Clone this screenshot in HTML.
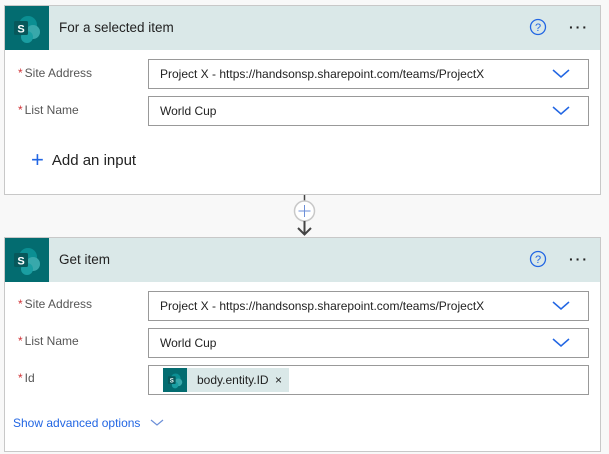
<!DOCTYPE html><html><head><style>
body{margin:0;width:609px;height:454px;background:#f8f8f8;font-family:"Liberation Sans",sans-serif;position:relative;overflow:hidden;color:#222}
.card{position:absolute;left:4px;width:597px;background:#fff;border:1px solid #c8c8c8;box-sizing:border-box}
.hdr{position:absolute;left:0;top:0;right:0;height:44px;background:#dae8e8}
.ic{position:absolute;left:0;top:0;width:44px;height:44px;background:#036c70}
.title{position:absolute;left:54px;top:14px;font-size:13.5px;color:#222}
.lbl{position:absolute;left:13px;font-size:12px;color:#555}
.lbl b{color:#d13438;font-weight:normal;margin-right:2px}
.inp{position:absolute;left:143px;width:441px;height:30px;border:1px solid #999;box-sizing:border-box;font-size:12px;line-height:28px;padding-left:11px}
.chev{position:absolute;right:18px;top:9px}
.q{position:absolute;left:524px;top:12px}
.dots{position:absolute;left:564px;top:13px;font-size:14px;letter-spacing:2px;font-weight:bold}
</style></head><body>
<svg width="0" height="0" style="position:absolute"><defs>
<g id="sp"><circle cx="23" cy="19" r="9" fill="#0b8f93"/><circle cx="28" cy="26" r="7" fill="#38a8ab"/><circle cx="22" cy="31" r="6" fill="#1a9ea2"/><rect x="9" y="15" width="14" height="14" rx="1.5" fill="#07585b"/><text x="16" y="26.5" font-size="11" font-weight="bold" fill="#fff" text-anchor="middle" font-family="Liberation Sans">S</text></g>
<g id="ch"><path d="M1 1l8 7 8-7" stroke="#2266e3" stroke-width="1.5" fill="none"/></g>
<g id="qq"><circle cx="9" cy="9" r="7.5" stroke="#2266e3" stroke-width="1.3" fill="none"/><text x="9" y="13" font-size="11" fill="#2266e3" text-anchor="middle" font-family="Liberation Sans">?</text></g>
</defs></svg>
<div class="card" style="top:5px;height:190px">
<div class="hdr"><div class="ic"><svg width="44" height="44"><use href="#sp"/></svg></div><div class="title">For a selected item</div>
<svg class="q" width="18" height="18"><use href="#qq"/></svg><div class="dots">···</div></div>
<div class="lbl" style="top:60px"><b>*</b>Site Address</div>
<div class="inp" style="top:53px">Project X - https://handsonsp.sharepoint.com/teams/ProjectX<svg class="chev" width="18" height="10"><use href="#ch"/></svg></div>
<div class="lbl" style="top:97px"><b>*</b>List Name</div>
<div class="inp" style="top:90px">World Cup<svg class="chev" width="18" height="10"><use href="#ch"/></svg></div>
<div style="position:absolute;left:26px;top:139px;font-size:15px;color:#222"><span style="color:#2266e3;font-size:22px;position:relative;top:2px;margin-right:8px">+</span>Add an input</div>
</div>
<svg style="position:absolute;left:285px;top:195px" width="40" height="42"><line x1="19.5" y1="0" x2="19.5" y2="6" stroke="#444" stroke-width="1.5"/><circle cx="19.5" cy="16" r="10" fill="#fff" stroke="#c8c8c8" stroke-width="1.5"/><path d="M19.5 10v12M13.5 16h12" stroke="#6c8fd8" stroke-width="1"/><path d="M19.5 26v14M13 33l6.5 6.5 6.5-6.5" stroke="#444" stroke-width="2" fill="none"/></svg>
<div class="card" style="top:237px;height:215px">
<div class="hdr"><div class="ic"><svg width="44" height="44"><use href="#sp"/></svg></div><div class="title">Get item</div>
<svg class="q" width="18" height="18"><use href="#qq"/></svg><div class="dots">···</div></div>
<div class="lbl" style="top:59px"><b>*</b>Site Address</div>
<div class="inp" style="top:53px">Project X - https://handsonsp.sharepoint.com/teams/ProjectX<svg class="chev" width="18" height="10"><use href="#ch"/></svg></div>
<div class="lbl" style="top:96px"><b>*</b>List Name</div>
<div class="inp" style="top:90px">World Cup<svg class="chev" width="18" height="10"><use href="#ch"/></svg></div>
<div class="lbl" style="top:133px"><b>*</b>Id</div>
<div class="inp" style="top:127px;padding-left:0">
<div style="position:absolute;left:14px;top:2px;height:24px;width:126px;background:#dae8e8;font-size:12px;line-height:24px">
<svg width="24" height="24" style="position:absolute;left:0;top:0;background:#036c70"><g transform="scale(0.55) translate(0,0)"><use href="#sp"/></g></svg>
<span style="position:absolute;left:34px">body.entity.ID <span style="margin-left:3px">×</span></span></div></div>
<div style="position:absolute;left:8px;top:178px;font-size:12px;color:#2266e3">Show advanced options <svg width="14" height="8" style="margin-left:6px"><path d="M1 1l6 5 6-5" stroke="#6c8fd8" stroke-width="1.2" fill="none"/></svg></div>
</div>
</body></html>
